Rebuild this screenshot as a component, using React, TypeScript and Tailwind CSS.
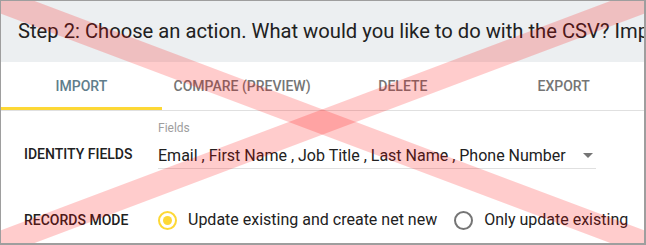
import { useState } from "react"

const tabs = ["Import", "Compare (Preview)", "Delete", "Export"]

function Radio({ checked }: { checked: boolean }) {
  return (
    <span
      className={`flex h-[19px] w-[19px] shrink-0 items-center justify-center rounded-full border-2 ${
        checked ? "border-[#fdd835]" : "border-[#757575]"
      }`}
    >
      {checked && <span className="h-[9px] w-[9px] rounded-full bg-[#fdd835]" />}
    </span>
  )
}

export default function App() {
  const [active, setActive] = useState(0)
  const [mode, setMode] = useState(0)

  return (
    <div
      className="relative h-[245px] w-[646px] overflow-hidden border-t border-l border-r-2 border-b-2 border-[#9e9e9e] bg-white"
      style={{ fontFamily: "Roboto, 'Liberation Sans', sans-serif" }}
    >
      {/* Header */}
      <div className="flex h-[61px] items-center overflow-hidden whitespace-nowrap bg-[#eceff1] pl-[17px] text-[20.2px] text-[#212121]">
        Step 2: Choose an action. What would you like to do with the CSV? Import
      </div>

      {/* Tabs */}
      <div className="grid h-[49px] grid-cols-4 border-b border-[#e0e0e0]">
        {tabs.map((t, i) => (
          <button
            key={t}
            onClick={() => setActive(i)}
            className={`relative flex items-center justify-center text-[14px] font-medium uppercase ${
              active === i ? "text-[#607d8b]" : "text-[#757575]"
            }`}
          >
            {t}
            {active === i && <span className="absolute bottom-0 left-0 right-0 h-[3px] bg-[#fdd835]" />}
          </button>
        ))}
      </div>

      {/* Identity fields */}
      <div className="flex items-end pl-[23px] pt-[9px]">
        <div className="w-[134px] pb-[5px] text-[14px] font-medium leading-5 text-[#212121]">IDENTITY FIELDS</div>
        <div className="w-[438px]">
          <div className="text-[12px] leading-4 text-[#9e9e9e]">Fields</div>
          <div className="mt-[7px] flex h-[26px] items-center justify-between border-b border-[#e0e0e0] pr-[3px] text-[16px] text-[#212121]">
            <span>Email , First Name , Job Title , Last Name , Phone Number</span>
            <svg width="10" height="5" viewBox="0 0 10 5" className="mb-[1px]">
              <path d="M0 0 L10 0 L5 5 Z" fill="#757575" />
            </svg>
          </div>
        </div>
      </div>

      {/* Records mode */}
      <div className="mt-[39px] flex items-center pl-[23px]">
        <div className="w-[134px] text-[14px] font-medium leading-5 text-[#212121]">RECORDS MODE</div>
        <label className="flex cursor-pointer items-center gap-[11px]" onClick={() => setMode(0)}>
          <Radio checked={mode === 0} />
          <span className="text-[16px] leading-6 text-[#212121]">Update existing and create net new</span>
        </label>
        <label className="ml-[17px] flex cursor-pointer items-center gap-[11px]" onClick={() => setMode(1)}>
          <Radio checked={mode === 1} />
          <span className="text-[16px] leading-6 text-[#212121]">Only update existing</span>
        </label>
      </div>

      {/* Red cross over the whole screenshot */}
      <svg
        className="pointer-events-none absolute inset-0 h-full w-full"
        viewBox="0 0 646 245"
        preserveAspectRatio="none"
      >
        <line x1="0" y1="0" x2="646" y2="245" stroke="rgba(255,0,0,0.2)" strokeWidth="24" />
        <line x1="0" y1="245" x2="646" y2="0" stroke="rgba(255,0,0,0.2)" strokeWidth="24" />
      </svg>
    </div>
  )
}
